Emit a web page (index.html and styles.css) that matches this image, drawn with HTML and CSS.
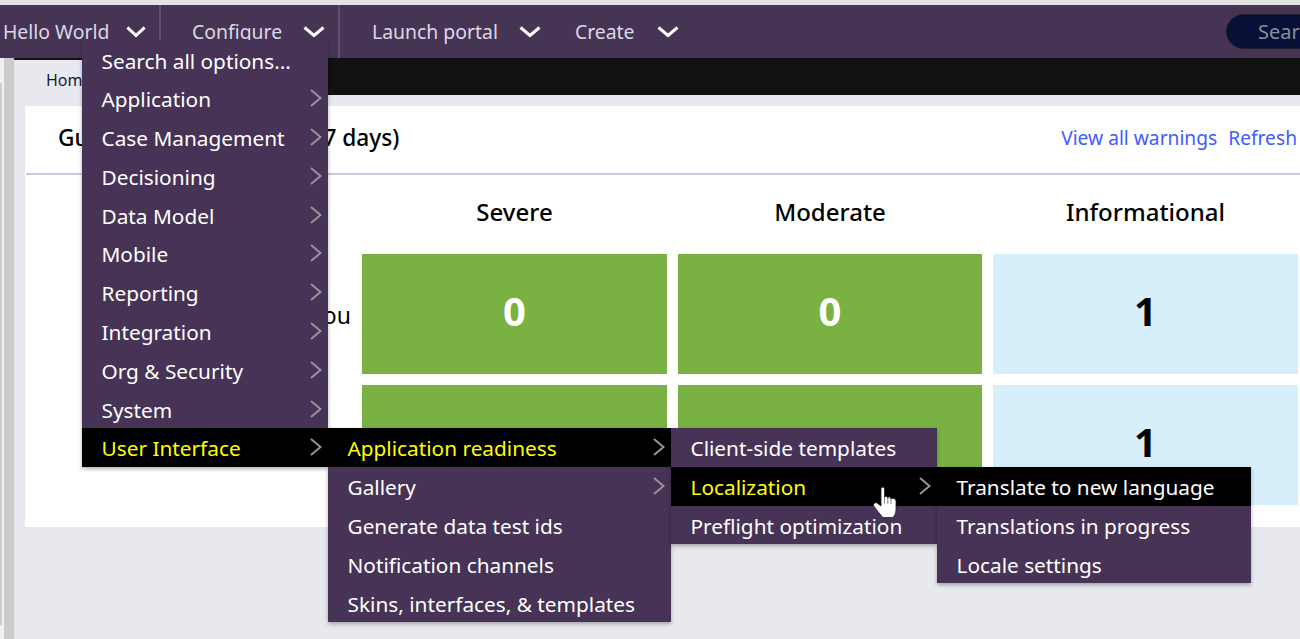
FILE: index.html
```html
<!DOCTYPE html>
<html lang="en">
<head>
<meta charset="utf-8">
<title>Guardrail warnings</title>
<link rel="stylesheet" href="styles.css">
</head>
<body>
<svg class="defs" width="0" height="0" aria-hidden="true">
  <symbol id="down" viewBox="0 0 22 12" preserveAspectRatio="none"><path d="M1.5 1.5 11 9.5 20.5 1.5" fill="none" stroke="currentColor" stroke-width="3"/></symbol>
  <symbol id="right" viewBox="0 0 12 18"><path d="M1 1 10.5 9 1 17" fill="none" stroke="currentColor" stroke-width="2"/></symbol>
</svg>
<div class="app">
  <header class="topnav">
    <div class="nav-item first"><span>Hello World</span><svg class="caret"><use href="#down"/></svg></div>
    <div class="nav-item second"><span>Configure</span><svg class="caret"><use href="#down"/></svg></div>
    <div class="nav-item third"><span>Launch portal</span><svg class="caret"><use href="#down"/></svg></div>
    <div class="nav-item fourth"><span>Create</span><svg class="caret"><use href="#down"/></svg></div>
    <div class="search">Search</div>
  </header>
  <div class="body-row">
    <aside class="rail"><div class="rail-inner"></div></aside>
    <main class="main">
      <div class="crumbs">
        <div class="crumb-text">Home</div>
        <div class="blackbar"></div>
      </div>
      <section class="card">
        <div class="card-head">
          <h1>Guardrail warnings (last 7 days)</h1>
          <div class="links"><a>View all warnings</a><a>Refresh</a></div>
        </div>
        <div class="grid">
          <div class="col-head empty"></div>
          <div class="col-head">Severe</div>
          <div class="col-head">Moderate</div>
          <div class="col-head">Informational</div>
          <div class="row-label">Introduced by you</div>
          <div class="cell good">0</div>
          <div class="cell good">0</div>
          <div class="cell info">1</div>
          <div class="row-label"></div>
          <div class="cell good">0</div>
          <div class="cell good">0</div>
          <div class="cell info">1</div>
        </div>
      </section>
    </main>
  </div>
  <nav class="menu root">
    <div class="mi">Search all options...</div>
    <div class="mi arrow">Application<svg class="chev"><use href="#right"/></svg></div>
    <div class="mi arrow">Case Management<svg class="chev"><use href="#right"/></svg></div>
    <div class="mi arrow">Decisioning<svg class="chev"><use href="#right"/></svg></div>
    <div class="mi arrow">Data Model<svg class="chev"><use href="#right"/></svg></div>
    <div class="mi arrow">Mobile<svg class="chev"><use href="#right"/></svg></div>
    <div class="mi arrow">Reporting<svg class="chev"><use href="#right"/></svg></div>
    <div class="mi arrow">Integration<svg class="chev"><use href="#right"/></svg></div>
    <div class="mi arrow">Org &amp; Security<svg class="chev"><use href="#right"/></svg></div>
    <div class="mi arrow">System<svg class="chev"><use href="#right"/></svg></div>
    <div class="mi arrow open">User Interface<svg class="chev"><use href="#right"/></svg>
      <div class="menu sub w2">
        <div class="mi arrow open">Application readiness<svg class="chev"><use href="#right"/></svg>
          <div class="menu sub w3">
            <div class="mi">Client-side templates</div>
            <div class="mi arrow open">Localization<svg class="chev"><use href="#right"/></svg>
              <svg class="hand" viewBox="-1 -.5 25 32" aria-hidden="true"><path d="M8 2.500C8 0 11.500 0 11.500 2.500V11C12 9.500 14.500 9.500 14.800 11.500 15.200 10 17.800 10.200 18 12.500 18.800 11.500 22.700 11.500 23 14.500V23C23 27 21.500 29 20 31H10C8 29 4 24 .8 19.500-.2 17.500 2 15.500 4 16.500L8 19.500Z" fill="#fff" stroke="#222" stroke-width=".8"/><path d="M11.500 11v6M14.800 11.500v6M18 12.500v5" fill="none" stroke="#666" stroke-width=".8"/></svg>
              <div class="menu sub w4">
                <div class="mi hover">Translate to new language</div>
                <div class="mi">Translations in progress</div>
                <div class="mi">Locale settings</div>
              </div>
            </div>
            <div class="mi">Preflight optimization</div>
          </div>
        </div>
        <div class="mi arrow">Gallery<svg class="chev"><use href="#right"/></svg></div>
        <div class="mi">Generate data test ids</div>
        <div class="mi">Notification channels</div>
        <div class="mi">Skins, interfaces, &amp; templates</div>
      </div>
    </div>
  </nav>
</div>
</body>
</html>
```
FILE: styles.css
```css
* { box-sizing: border-box; }
html, body { margin: 0; height: 100%; }
body {
  font-family: "Noto Sans", "Open Sans", sans-serif;
  color: #000;
  background: #e8e9ee;
  overflow: hidden;
}
.defs { position: absolute; }
.app { position: relative; width: 1300px; height: 639px; overflow: hidden; padding-top: 5px; background: #e8e9ee; }
.app::before { content: ""; position: absolute; left: 0; right: 0; top: 0; height: 5px; background: #e2e2e2; }

.topnav {
  height: 53px;
  background: #463455;
  color: #dcd8e2;
  display: flex;
  align-items: flex-start;
  font-size: 19.4px;
  line-height: 53px;
}
.nav-item { display: flex; height: 53px; align-items: center; white-space: nowrap; }
.caret { width: 22px; height: 12px; color: #fff; flex: none; }
.first { width: 161px; padding-left: 3px; border-right: 2px solid #5f5070; }
.first .caret { margin-left: 17px; width: 20px; }
.second { width: 179px; padding-left: 31px; border-right: 2px solid #5f5070; }
.second .caret { margin-left: 21px; }
.third { padding-left: 32px; }
.third .caret { margin-left: 21px; }
.fourth { padding-left: 34px; }
.fourth .caret { margin-left: 22px; }
.search {
  margin: 9px -16px 0 auto;
  width: 90px;
  height: 35px;
  line-height: 33px;
  padding-left: 31px;
  font-size: 20px;
  color: #8a8d9c;
  background: #081038;
  border: 1px solid #221c2c;
  border-radius: 18px;
  overflow: hidden;
}

.body-row { display: flex; height: 581px; }
.rail { width: 14px; flex: none; background: #f1f1f1; border-right: 10px solid #cccccc; padding-top: 25px; height: 581px; }
.rail-inner { width: 2px; height: 542px; background: #cfcfcf; }
.main { flex: 1; min-width: 0; }
.crumbs { display: flex; height: 37px; border-top: 2px solid #111; }
.crumb-text { width: 314px; padding: 9px 0 0 32px; font-size: 16px; line-height: 22px; color: #10203c; }
.blackbar { flex: 1; background: #111; }
.card {
  margin: 11px 0 0 11px;
  height: 421px;
  background: #fff;
}
.card-head {
  height: 69px;
  border-bottom: 2px solid #c9c9db;
  margin-left: 1px;
  display: flex;
  align-items: center;
  justify-content: space-between;
  padding: 0 3px 0 32px;
}
h1 { margin: 0; font-size: 22.7px; font-weight: 500; line-height: 30px; position: relative; top: -2px; }
.links { display: flex; gap: 11px; font-size: 19.2px; color: #3f5bff; position: relative; top: -2px; }

.grid {
  display: grid;
  grid-template-columns: 326px 305px 304px 305px;
  grid-template-rows: 68px 120px 120px;
  gap: 11px;
  width: 1284px;
}
.col-head { font-size: 24px; font-weight: 500; text-align: center; line-height: 30px; padding-top: 22px; }
.row-label { text-align: right; font-size: 23px; line-height: 30px; padding-top: 46px; white-space: nowrap; }
.cell { display: flex; align-items: center; justify-content: center; font-size: 40px; font-weight: 700; padding-bottom: 8px; }
.good { background: #79b142; color: #fff; }
.info { background: #d6effb; color: #000; }

.menu { position: absolute; background: #463355; color: #fff; box-shadow: 0 2px 4px rgba(0,0,0,.3); font-size: 20.8px; }
.root { left: 82px; top: 40px; width: 246px; }
.sub { left: 100%; top: 0; }
.w2 { width: 343px; }
.w3 { width: 266px; }
.w4 { width: 314px; }
.mi { position: relative; height: 38.8px; line-height: 38.8px; padding: 1.5px 0 0 19.5px; white-space: nowrap; }
.chev { position: absolute; right: 6px; top: 10.5px; width: 12px; height: 18px; color: #96949c; }
.open, .hover { background: #000; }
.open { color: #ffff00; }
.hover { color: #fff; }
.open > .sub { color: #fff; }
.hand { position: absolute; left: 201px; top: 19px; width: 25px; height: 32px; z-index: 3; }
```
